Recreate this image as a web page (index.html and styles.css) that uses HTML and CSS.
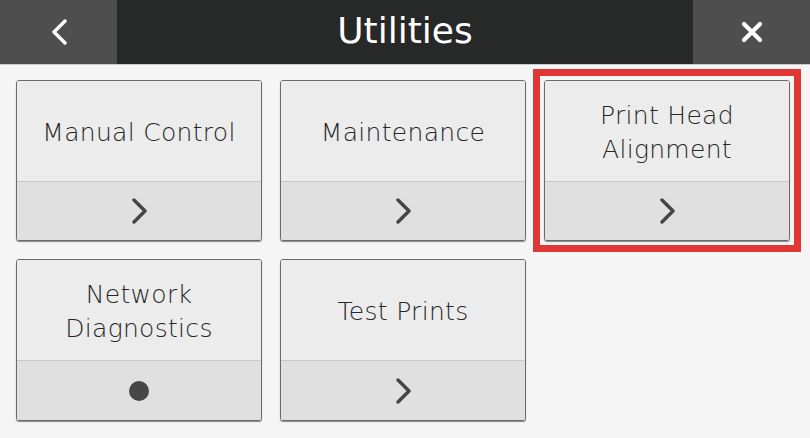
FILE: index.html
```html
<!DOCTYPE html>
<html>
<head>
<meta charset="utf-8">
<link rel="stylesheet" href="styles.css">
</head>
<body>
<div class="screen">
  <header class="topbar">
    <div class="nav-btn">
      <svg width="18" height="26" viewBox="0 0 18 26"><polyline points="15,2 4,13 15,24" fill="none" stroke="#fff" stroke-width="3.4" stroke-linecap="round" stroke-linejoin="round"/></svg>
    </div>
    <div class="title">Utilities</div>
    <div class="nav-btn">
      <svg width="22" height="22" viewBox="0 0 22 22"><path d="M3 3 L19 19 M19 3 L3 19" fill="none" stroke="#fff" stroke-width="4.2" stroke-linecap="round"/></svg>
    </div>
  </header>
  <main class="grid">
    <div class="cell"><div class="tile"><div class="label">Manual Control</div><div class="action"><svg class="chev" width="17" height="26" viewBox="0 0 17 26"><polyline points="3,2 14,13 3,24" fill="none" stroke="#454545" stroke-width="3.4" stroke-linejoin="round" stroke-linecap="round"/></svg></div></div></div>
    <div class="cell"><div class="tile"><div class="label">Maintenance</div><div class="action"><svg class="chev" width="17" height="26" viewBox="0 0 17 26"><polyline points="3,2 14,13 3,24" fill="none" stroke="#454545" stroke-width="3.4" stroke-linejoin="round" stroke-linecap="round"/></svg></div></div></div>
    <div class="cell selected"><div class="tile"><div class="label">Print Head<br>Alignment</div><div class="action"><svg class="chev" width="17" height="26" viewBox="0 0 17 26"><polyline points="3,2 14,13 3,24" fill="none" stroke="#454545" stroke-width="3.4" stroke-linejoin="round" stroke-linecap="round"/></svg></div></div></div>
    <div class="cell"><div class="tile"><div class="label">Network<br>Diagnostics</div><div class="action"><span class="dot"></span></div></div></div>
    <div class="cell"><div class="tile"><div class="label">Test Prints</div><div class="action"><svg class="chev" width="17" height="26" viewBox="0 0 17 26"><polyline points="3,2 14,13 3,24" fill="none" stroke="#454545" stroke-width="3.4" stroke-linejoin="round" stroke-linecap="round"/></svg></div></div></div>
  </main>
</div>
</body>
</html>
```
FILE: styles.css
```css
html, body {
  margin: 0;
  padding: 0;
}
body {
  width: 810px;
  height: 438px;
  overflow: hidden;
  background: #f4f5f4;
  font-family: "DejaVu Sans", "Liberation Sans", sans-serif;
}
.screen {
  display: flex;
  flex-direction: column;
  height: 438px;
}
.topbar {
  display: flex;
  height: 64px;
  background: #272828;
  border-bottom: 1px solid #c9cbc9;
}
.nav-btn {
  width: 117px;
  background: #4e4e4e;
  display: flex;
  align-items: center;
  justify-content: center;
}
.title {
  flex: 1;
  color: #fff;
  font-size: 36px;
  display: flex;
  align-items: center;
  justify-content: center;
  padding-bottom: 3px;
}
.grid {
  display: grid;
  grid-template-columns: repeat(3, 246px);
  grid-template-rows: 161px 162px;
  column-gap: 18px;
  row-gap: 18px;
  padding: 15px 0 0 16px;
}
.cell {
  position: relative;
}
.tile {
  height: 100%;
  box-sizing: border-box;
  border: 1px solid #6a6a6a;
  border-radius: 3px;
  box-shadow: 0 1px 1px rgba(0,0,0,0.45);
  display: flex;
  flex-direction: column;
  overflow: hidden;
}
.label {
  height: 101px;
  box-sizing: border-box;
  padding-top: 4px;
  background: #ececec;
  border-bottom: 1px solid #c9c9c9;
  display: flex;
  align-items: center;
  justify-content: center;
  text-align: center;
  color: #262626;
  font-size: 25px;
  font-weight: 200;
  line-height: 34px;
  letter-spacing: 0.3px;
}
.action {
  flex: 1;
  background: #e0e0e0;
  display: flex;
  align-items: center;
  justify-content: center;
}
.dot {
  width: 20px;
  height: 20px;
  border-radius: 50%;
  background: #474747;
}
.selected::after {
  content: "";
  position: absolute;
  left: -11px;
  top: -11px;
  right: -11px;
  bottom: -11px;
  border: 7px solid #df3733;
  pointer-events: none;
}
```
